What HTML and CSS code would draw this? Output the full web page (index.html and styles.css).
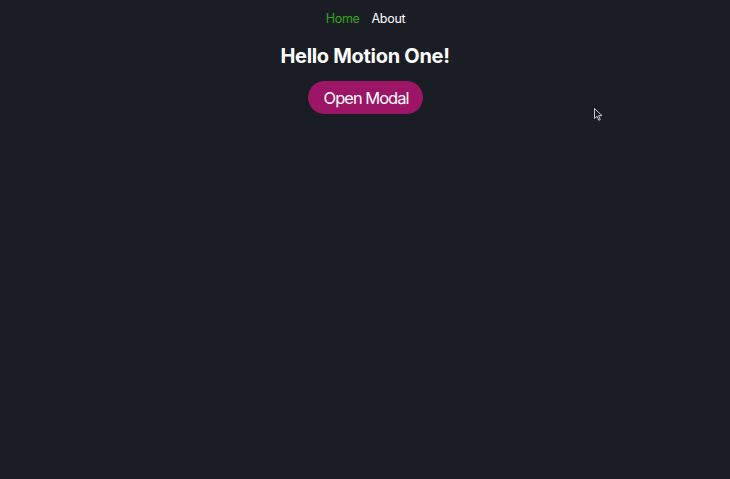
FILE: index.html
```html
<!DOCTYPE html>
<html>
<head>
<meta charset="utf-8">
<link rel="stylesheet" href="styles.css">
</head>
<body>
<nav class="nav">
  <a class="nav-link active" href="#">Home</a>
  <a class="nav-link" href="#">About</a>
</nav>
<main class="main">
  <h1 class="title">Hello Motion One!</h1>
  <button class="open-btn">Open Modal</button>
</main>
<svg class="cursor" width="10" height="14" viewBox="0 0 10 14"><path d="M0.5 0.5 L0.5 10.5 L3 8.2 L4.8 12.3 L6.3 11.7 L4.6 7.7 L8 7.7 Z" fill="#1b1d24" stroke="#c8c8c8" stroke-width="1"/></svg>
</body>
</html>
```
FILE: styles.css
```css
html, body {
  margin: 0;
  padding: 0;
  background: #1b1d24;
  height: 100%;
}
body {
  font-family: Inter, "Noto Sans", sans-serif;
  color: #fff;
  position: relative;
}
.nav {
  display: flex;
  justify-content: center;
  gap: 12px;
  padding-top: 11px;
  padding-left: 1px;
}
.nav-link {
  color: #fff;
  text-decoration: none;
  font-size: 12.5px;
  letter-spacing: -0.3px;
  line-height: 16px;
}
.nav-link.active {
  color: #35a51f;
}
.main {
  display: flex;
  flex-direction: column;
  align-items: center;
}
.title {
  font-size: 20px;
  font-weight: 700;
  letter-spacing: -0.3px;
  margin: 17px 0 0;
  line-height: 24px;
}
.open-btn {
  margin-top: 13px;
  margin-left: 1px;
  background: #9c1566;
  color: #fff;
  border: none;
  border-radius: 17px;
  font-family: inherit;
  font-size: 16.5px;
  letter-spacing: -1px;
  height: 33px;
  padding: 0 15px 0 16px;
}
.cursor {
  position: absolute;
  left: 594px;
  top: 108px;
}
```
